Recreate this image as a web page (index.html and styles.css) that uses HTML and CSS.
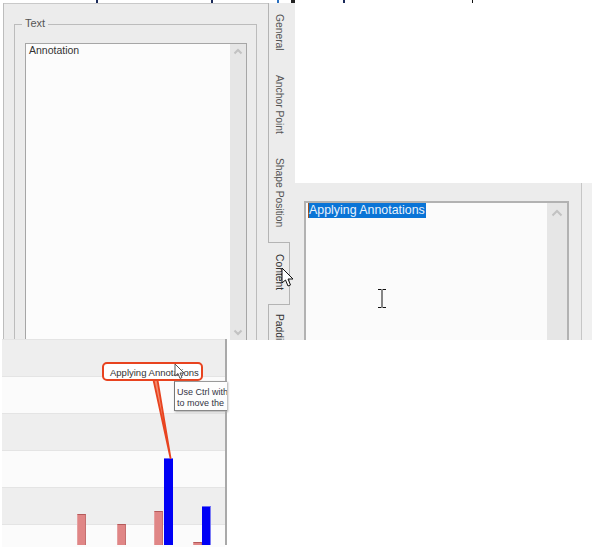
FILE: index.html
```html
<!DOCTYPE html>
<html lang="en">
<head>
<meta charset="utf-8">
<title>Applying Annotations</title>
<link rel="stylesheet" href="styles.css">
</head>
<body>
<div class="canvas">
  <i class="tick t1"></i><i class="tick t2"></i><i class="tick t3"></i><i class="tick t4"></i><i class="tick t5"></i><i class="tick t6"></i>

  <section class="win dialog">
    <div class="main">
      <fieldset class="group">
        <legend>Text</legend>
        <div class="editor">
          <div class="edit-text">Annotation</div>
          <div class="scroll">
            <svg class="chev" width="10" height="7" viewBox="0 0 10 7"><path d="M1.5 5.5 5 2l3.500 3.500" fill="none" stroke="#c2c2c2" stroke-width="2"/></svg>
            <svg class="chev" width="10" height="7" viewBox="0 0 10 7"><path d="M1.500 1.500 5 5l3.500-3.500" fill="none" stroke="#c2c2c2" stroke-width="2"/></svg>
          </div>
        </div>
      </fieldset>
    </div>
    <nav class="tabs">
      <div class="tab tab-general"><span>General</span></div>
      <div class="tab tab-anchor"><span>Anchor Point</span></div>
      <div class="tab tab-shape"><span>Shape Position</span></div>
      <div class="tab tab-active"><span>Content</span></div>
      <div class="tab tab-padding"><span>Padding</span></div>
    </nav>
  </section>

  <section class="win content">
    <div class="content-main">
      <div class="editor2">
        <div class="edit-text2"><span class="sel">Applying Annotations</span></div>
        <div class="scroll2">
          <svg class="chev" width="12" height="8" viewBox="0 0 12 8"><path d="M1.500 6.500 6 2l4.500 4.500" fill="none" stroke="#c2c2c2" stroke-width="2"/></svg>
        </div>
      </div>
    </div>
    <div class="content-edge"></div>
  </section>

  <svg class="ibeam" width="10" height="19" viewBox="0 0 10 19"><path d="M1 .5h3.500M5.500 .5H9M5 1v17M1 18.500h3.500M5.500 18.500H9" fill="none" stroke="#111" stroke-width="1"/></svg>
  <svg class="arrow" width="14" height="20" viewBox="0 0 14 20"><path d="M1 1v15l3.500-3 2.500 6 2.500-1-2.500-6H12z" fill="#fff" stroke="#111" stroke-width="1"/></svg>

  <section class="win chart">
    <div class="band alt"></div>
    <div class="band"></div>
    <div class="band alt"></div>
    <div class="band"></div>
    <div class="band alt"></div>
    <div class="band"></div>
    <i class="bar pink p1"></i><i class="bar pink p2"></i><i class="bar pink p3"></i><i class="bar pink p4"></i>
    <i class="bar blue b1"></i><i class="bar blue b2"></i>
    <svg class="leader" width="30" height="90" viewBox="0 0 30 90"><path d="M1.500 0 18.500 78 5.500 0" fill="#f28a6e" stroke="#e8431f" stroke-width="1.800" stroke-linejoin="round"/></svg>
    <div class="callout">Applying Annotations</div>
    <div class="tip"><div class="tip-inner">Use Ctrl with<br>to move the</div></div>
    <svg class="arrow2" width="12" height="17" viewBox="0 0 12 17"><path d="M1 1v12l3-2.500 2 5 2-1-2-4.500h4z" fill="#fff" stroke="#555" stroke-width="1"/></svg>
  </section>
</div>
</body>
</html>
```
FILE: styles.css
```css
* { box-sizing: border-box; }
html, body { margin: 0; padding: 0; background: #fff; }
body { font-family: "Liberation Sans", Arial, sans-serif; font-size: 11px; color: #333; }
.canvas { position: relative; width: 598px; height: 547px; overflow: hidden; }

.tick { position: absolute; top: 0; width: 2px; height: 3px; background: #1a2a5a; }
.t1 { left: 96px; }
.t2 { left: 211px; }
.t3 { left: 277px; background: #2a70c0; }
.t4 { left: 291px; width: 4px; background: #222; }
.t5 { left: 343px; }
.t6 { left: 472px; width: 1px; background: #111; }

.win { position: absolute; background: #ececec; overflow: hidden; }

.dialog { left: 3px; top: 3px; width: 292px; height: 337px; display: flex; border-left: 1px solid #bdbdbd; }
.main { width: 264px; height: 420px; flex: none; padding: 20px 0 0 10px; border-top: 1px solid #c9c9c9; }
.group { margin: 0; padding: 0; width: 243px; height: 400px; border: 1px solid #bcbcbc; position: relative; }
.group legend { position: absolute; left: 7px; top: -9px; padding: 0 3px; background: #ececec; color: #555; font-size: 11px; line-height: 14px; }
.editor { margin: 18px 0 0 10px; width: 222px; height: 360px; background: #fcfcfc; border: 1px solid #a6a6a6; display: flex; }
.edit-text { flex: 1; padding: 0 3px; font-size: 10.500px; line-height: 12px; color: #333; }
.scroll { width: 16px; height: 296px; background: #e6e6e6; display: flex; flex-direction: column; justify-content: space-between; align-items: center; padding: 4px 0; }
.chev { display: block; flex: none; }

.tabs { width: 27px; flex: none; display: flex; flex-direction: column; }
.tab { width: 27px; border-left: 1px solid #b4b4b4; color: #555; padding-left: 4px; font-size: 10.300px; line-height: 13px; flex: none; }
.tab span { writing-mode: vertical-rl; white-space: nowrap; display: block; }
.tab-general { height: 58px; padding-top: 11px; }
.tab-anchor { height: 87px; padding-top: 14px; }
.tab-shape { height: 94px; padding-top: 10px; }
.tab-active { height: 63px; width: 22px; padding-top: 11px; border-left: 0; border-top: 1px solid #b4b4b4; border-bottom: 1px solid #b4b4b4; border-right: 1px solid #b4b4b4; padding-left: 5px; color: #333; }
.tab-padding { height: 60px; padding-top: 9px; color: #333; }

.content { left: 295px; top: 183px; width: 297px; height: 157px; display: flex; }
.content-main { width: 287px; flex: none; border-right: 1px solid #c6c6c6; padding: 18px 0 0 10px; }
.editor2 { width: 265px; height: 200px; margin-left: -1px; background: #fbfbfb; border: 2px solid #b2b2b2; display: flex; }
.edit-text2 { flex: 1; padding: 0 0 0 2px; font-size: 12.400px; line-height: 15px; }
.sel { background: #0a74d6; color: #e8f2fc; display: inline-block; padding: 0 1px 0 0; border-left: 1px solid #a0521e; }
.scroll2 { width: 20px; background: #e6e6e6; display: flex; justify-content: center; padding-top: 6px; align-items: flex-start; }
.content-edge { flex: 1; background: #f0f0f0; }

.ibeam { position: absolute; left: 377px; top: 289px; }
.arrow { position: absolute; left: 281px; top: 267px; }

.chart { left: 2px; top: 339px; width: 225px; height: 206px; background: #fbfbfb; border-right: 2px solid #a9a9a9; display: flex; flex-direction: column; overflow: visible; }
.band { height: 37px; flex: none; background: #fbfbfb; border-top: 1px solid #e4e4e4; }
.band.alt { background: #eeeeee; }
.band:last-of-type { height: 21px; }
.bar { position: absolute; bottom: 0; width: 9px; }
.pink { background: #e08686; border-top: 1px solid #b45a5a; border-left: 1px solid #e5a0a0; border-right: 1px solid #c57070; }
.blue { background: #0000f5; border-top: 1px solid #6a6af5; }
.p1 { left: 75px; height: 31px; }
.p2 { left: 115px; height: 21px; }
.p3 { left: 152px; height: 34px; }
.p4 { left: 191px; height: 3px; }
.b1 { left: 162px; height: 87px; }
.b2 { left: 200px; height: 39px; border-right: 1px solid #7a7af5; }

.leader { position: absolute; left: 150px; top: 41px; }
.callout { position: absolute; left: 100px; top: 23px; width: 101px; height: 19px; background: #fff; border: 2px solid #e8431f; border-radius: 5px; font-size: 9.500px; line-height: 17px; padding-left: 6px; color: #333; white-space: nowrap; }
.tip { position: absolute; left: 172px; top: 42px; width: 53px; height: 30px; overflow: hidden; background: #fdfdfd; border-left: 1px solid #777; border-top: 1px solid #999; border-bottom: 1px solid #888; box-shadow: 1px 1px 2px #aaa; }
.tip-inner { padding: 5px 0 0 2px; font-size: 9px; line-height: 10.500px; color: #334; white-space: nowrap; }
.arrow2 { position: absolute; left: 172px; top: 24px; }
```
